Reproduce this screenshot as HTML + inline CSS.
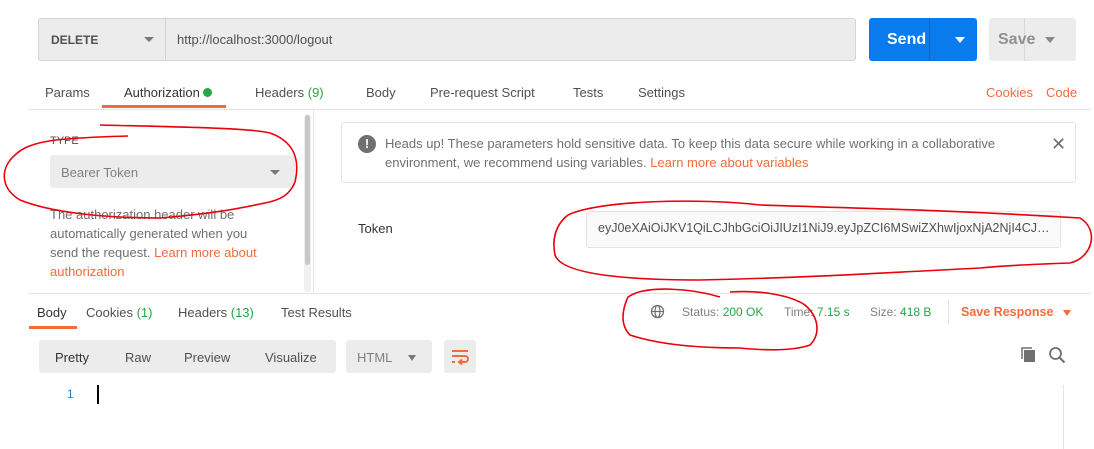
<!DOCTYPE html>
<html><head><style>
*{box-sizing:border-box;margin:0;padding:0}
body{width:1094px;height:449px;background:#fff;font-family:"Liberation Sans",sans-serif;font-size:13px;color:#505050;position:relative;overflow:hidden}
.a{position:absolute;white-space:nowrap}
.or{color:#f26b3a}.gr{color:#26a644}
</style></head><body>
<div class="a" style="left:38px;top:18px;width:818px;height:43px;background:#ececec;border:1px solid #d4d4d4;border-radius:3px"></div>
<div class="a" style="left:165px;top:18px;width:1px;height:43px;background:#d4d4d4"></div>
<div class="a" style="left:51px;top:33px;font-weight:bold;font-size:12px">DELETE</div>
<div class="a" style="left:144px;top:37px;border-left:5px solid transparent;border-right:5px solid transparent;border-top:5px solid #777"></div>
<div class="a" style="left:177px;top:32px">http://localhost:3000/logout</div>
<div class="a" style="left:869px;top:18px;width:108px;height:43px;background:#097bed;border-radius:3px"></div>
<div class="a" style="left:929px;top:18px;width:1px;height:43px;background:#0a68c8"></div>
<div class="a" style="left:887px;top:31px;color:#fff;font-weight:bold;font-size:16px">Send</div>
<div class="a" style="left:955px;top:37px;border-left:5px solid transparent;border-right:5px solid transparent;border-top:6px solid #fff"></div>
<div class="a" style="left:989px;top:18px;width:87px;height:43px;background:#ececec;border-radius:3px"></div>
<div class="a" style="left:1024px;top:18px;width:1px;height:43px;background:#d8d8d8"></div>
<div class="a" style="left:998px;top:31px;color:#909090;font-weight:bold;font-size:16px">Save</div>
<div class="a" style="left:1045px;top:37px;border-left:5px solid transparent;border-right:5px solid transparent;border-top:6px solid #888"></div>

<div class="a" style="left:45px;top:85px">Params</div>
<div class="a" style="left:124px;top:85px;color:#333">Authorization</div>
<div class="a" style="left:203px;top:88px;width:9px;height:9px;border-radius:50%;background:#26a644"></div>
<div class="a" style="left:102px;top:105px;width:124px;height:3px;background:#f26b3a"></div>
<div class="a" style="left:255px;top:85px">Headers <span class="gr">(9)</span></div>
<div class="a" style="left:366px;top:85px">Body</div>
<div class="a" style="left:430px;top:85px">Pre-request Script</div>
<div class="a" style="left:573px;top:85px">Tests</div>
<div class="a" style="left:638px;top:85px">Settings</div>
<div class="a or" style="left:986px;top:85px">Cookies</div>
<div class="a or" style="left:1046px;top:85px">Code</div>
<div class="a" style="left:28px;top:109px;width:1062px;height:1px;background:#e4e4e4"></div>

<div class="a" style="left:50px;top:135px;font-size:11px">TYPE</div>
<div class="a" style="left:50px;top:155px;width:245px;height:33px;background:#ececec;border-radius:3px"></div>
<div class="a" style="left:61px;top:165px;color:#808080">Bearer Token</div>
<div class="a" style="left:270px;top:170px;border-left:5px solid transparent;border-right:5px solid transparent;border-top:5px solid #777"></div>
<div class="a" style="left:50px;top:205px;line-height:19px;color:#707070">The authorization header will be<br>automatically generated when you<br>send the request. <span class="or">Learn more about</span><br><span class="or">authorization</span></div>
<div class="a" style="left:304px;top:114px;width:7px;height:178px;background:#f0f0f0;border-radius:3px"></div>
<div class="a" style="left:305px;top:115px;width:5px;height:150px;background:#c8c8c8;border-radius:3px"></div>
<div class="a" style="left:313px;top:110px;width:1px;height:183px;background:#e4e4e4"></div>

<div class="a" style="left:341px;top:122px;width:735px;height:61px;border:1px solid #e4e4e4;border-radius:3px"></div>
<div class="a" style="left:358px;top:135px;width:18px;height:18px;border-radius:50%;background:#707070;color:#fff;font-weight:bold;font-size:13px;text-align:center;line-height:18px">!</div>
<div class="a" style="left:385px;top:134px;line-height:19px;color:#707070">Heads up! These parameters hold sensitive data. To keep this data secure while working in a collaborative<br>environment, we recommend using variables. <span class="or">Learn more about variables</span></div>
<div class="a" style="left:1051px;top:134px;font-size:18px;color:#707070">✕</div>

<div class="a" style="left:358px;top:221px;color:#333">Token</div>
<div class="a" style="left:586px;top:211px;width:475px;height:37px;background:#fafafa;border:1px solid #e4e4e4;border-radius:3px"></div>
<div class="a" style="left:598px;top:221px;width:452px;overflow:hidden;text-overflow:ellipsis;font-size:12.5px">eyJ0eXAiOiJKV1QiLCJhbGciOiJIUzI1NiJ9.eyJpZCI6MSwiZXhwIjoxNjA2NjI4CJ9abcdef</div>
<div class="a" style="left:28px;top:293px;width:1062px;height:1px;background:#e4e4e4"></div>

<div class="a" style="left:37px;top:305px;color:#333">Body</div>
<div class="a" style="left:29px;top:326px;width:48px;height:3px;background:#f26b3a"></div>
<div class="a" style="left:86px;top:305px">Cookies <span class="gr">(1)</span></div>
<div class="a" style="left:178px;top:305px">Headers <span class="gr">(13)</span></div>
<div class="a" style="left:281px;top:305px">Test Results</div>
<svg class="a" style="left:650px;top:304px" width="15" height="15" viewBox="0 0 15 15"><circle cx="7.5" cy="7.5" r="6" fill="none" stroke="#707070" stroke-width="1.3"/><ellipse cx="7.5" cy="7.5" rx="2.5" ry="6" fill="none" stroke="#707070" stroke-width="1.2"/><path d="M1.5 7.5h12" stroke="#707070" stroke-width="1.2"/></svg>
<div class="a" style="left:682px;top:305px;font-size:12px;color:#808080">Status: <span class="gr">200 OK</span></div>
<div class="a" style="left:784px;top:305px;font-size:12px;color:#808080">Time: <span class="gr">7.15 s</span></div>
<div class="a" style="left:870px;top:305px;font-size:12px;color:#808080">Size: <span class="gr">418 B</span></div>
<div class="a" style="left:948px;top:300px;width:1px;height:24px;background:#e4e4e4"></div>
<div class="a or" style="left:961px;top:305px;font-weight:bold;font-size:12.5px">Save Response</div>
<div class="a" style="left:1063px;top:310px;border-left:4px solid transparent;border-right:4px solid transparent;border-top:6px solid #f26b3a"></div>

<div class="a" style="left:39px;top:340px;width:297px;height:33px;background:#ececec;border-radius:3px"></div>
<div class="a" style="left:55px;top:350px;color:#333">Pretty</div>
<div class="a" style="left:125px;top:350px">Raw</div>
<div class="a" style="left:184px;top:350px">Preview</div>
<div class="a" style="left:265px;top:350px">Visualize</div>
<div class="a" style="left:346px;top:340px;width:86px;height:33px;background:#ececec;border-radius:3px"></div>
<div class="a" style="left:357px;top:350px;color:#808080">HTML</div>
<div class="a" style="left:408px;top:355px;border-left:4px solid transparent;border-right:4px solid transparent;border-top:6px solid #777"></div>
<div class="a" style="left:444px;top:340px;width:32px;height:33px;background:#ececec;border-radius:3px"></div>
<svg class="a" style="left:450px;top:347px" width="20" height="20" viewBox="0 0 20 20"><path d="M2 4h16M2 9h13a3 3 0 0 1 0 6h-5M12 12.5l-3 2.5 3 2.5" fill="none" stroke="#f26b3a" stroke-width="2"/><path d="M2 15h3" stroke="#f26b3a" stroke-width="2"/></svg>
<svg class="a" style="left:1020px;top:346px" width="18" height="18" viewBox="0 0 18 18"><rect x="4" y="4" width="11" height="12" fill="#707070"/><path d="M2 13V2h10" fill="none" stroke="#707070" stroke-width="1.5"/></svg>
<svg class="a" style="left:1048px;top:346px" width="18" height="18" viewBox="0 0 18 18"><circle cx="7.5" cy="7.5" r="5.5" fill="none" stroke="#707070" stroke-width="1.8"/><path d="M11.5 11.5l5 5" stroke="#707070" stroke-width="2"/></svg>

<div class="a" style="left:67px;top:387px;font-size:12px;color:#2a7bbf">1</div>
<div class="a" style="left:97px;top:385px;width:2px;height:19px;background:#000"></div>
<div class="a" style="left:1063px;top:385px;width:1px;height:64px;background:#e4e4e4"></div>

<svg class="a" style="left:0;top:0" width="1094" height="449" viewBox="0 0 1094 449" fill="none" stroke="#e8000a" stroke-width="1.6">
<path d="M100 125 C180 127 250 128 270 133 C295 142 300 160 295 182 C290 195 280 200 265 203 C240 208 220 213 160 218 C100 218 50 212 20 200 C0 188 0 168 15 155 C30 140 60 138 128 136"/>
<path d="M568 215 C600 200 700 198 760 205 C850 208 950 210 1080 218 C1100 230 1092 258 1070 263 C1040 264 1000 266 980 268 C900 272 800 278 700 280 C600 280 560 270 555 255 C552 240 555 225 568 215"/>
<path d="M628 297 C645 285 690 288 720 297 M730 292 C760 290 790 295 805 305 C820 318 820 335 810 345 C790 352 760 350 740 348 C700 348 660 345 630 335 C620 325 622 310 628 297"/>
</svg>
</body></html>
